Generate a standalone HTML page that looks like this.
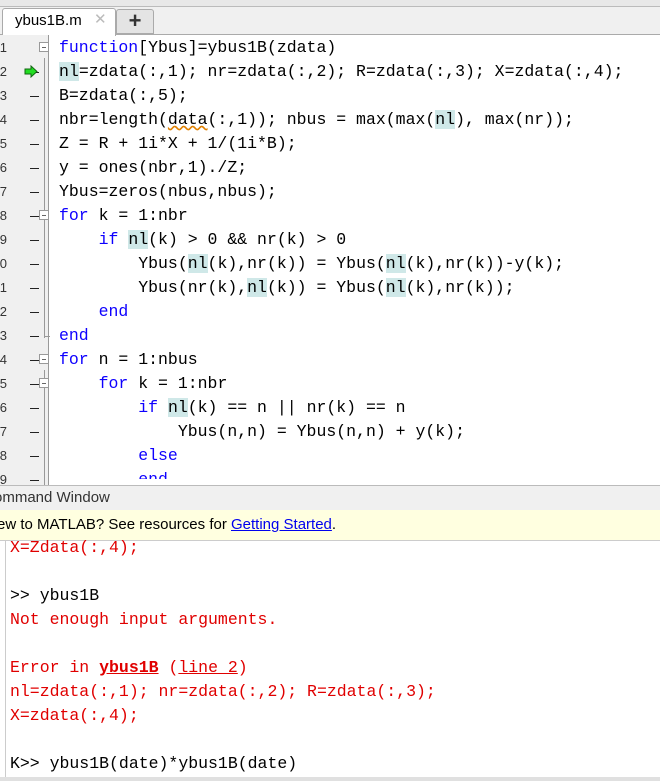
<!DOCTYPE html>
<html><head><style>
body{margin:0;width:660px;height:781px;overflow:hidden;background:#fff;position:relative;font-family:"Liberation Sans",sans-serif}
.m{font-family:"Liberation Mono",monospace;font-size:16.5px;white-space:pre;position:absolute;line-height:24px}
.k{color:#0e00ff}.h{background:#cfe8e8}
.ln{position:absolute;left:-5px;width:12px;font-size:13px;color:#333;overflow:hidden;text-align:right}
.d{position:absolute;left:30px;width:9px;height:1px;background:#222}
.r{color:#e00000}
</style></head><body>
<div style="position:absolute;left:0;top:0;width:660px;height:6px;background:#e8e8e8;border-bottom:1px solid #bbb"></div>
<div style="position:absolute;left:0;top:7px;width:660px;height:27px;background:#f0f0f0;border-bottom:1px solid #aaa"></div>
<div style="position:absolute;left:2px;top:8px;width:112px;height:27px;background:#fff;border:1px solid #aaa;border-bottom:none;border-radius:3px 3px 0 0"></div>
<div style="position:absolute;left:15px;top:12px;font-size:15px;color:#000">ybus1B.m</div>
<div style="position:absolute;left:94px;top:10px;font-size:15px;color:#bbb">✕</div>
<div style="position:absolute;left:116px;top:9px;width:36px;height:23px;background:#e4e4e4;border:1px solid #aaa;border-radius:3px 3px 0 0;text-align:center;font-size:22px;line-height:22px;font-weight:bold;color:#333">+</div>
<div style="position:absolute;left:0;top:35px;width:48px;height:450px;background:#f0f0f0;border-right:1px solid #999"></div>
<div style="position:absolute;left:44px;top:58px;width:1px;height:280px;background:#999"></div>
<div style="position:absolute;left:44px;top:370px;width:1px;height:115px;background:#999"></div>
<div id="ed"></div>
<div style="position:absolute;left:0;top:485px;width:660px;height:25px;background:#f0f0f0;border-top:1px solid #bbb;border-bottom:1px solid #ccc"></div>
<div style="position:absolute;left:-6px;top:489px;font-size:15px;color:#333">ommand Window</div>
<div style="position:absolute;left:0;top:510px;width:660px;height:30px;background:#ffffe0;border-bottom:1px solid #ccc"></div>
<div style="position:absolute;left:-3px;top:516px;font-size:15px;color:#000">ew to MATLAB? See resources for <span style="color:#0000ee;text-decoration:underline">Getting Started</span>.</div>
<div style="position:absolute;left:5px;top:541px;width:1px;height:240px;background:#ccc"></div>
<div class="m r" style="left:10px;top:536px">X=Zdata(:,4);</div>
<div class="m" style="left:10px;top:584px">&gt;&gt; ybus1B</div>
<div class="m r" style="left:10px;top:608px">Not enough input arguments.</div>
<div class="m r" style="left:10px;top:656px">Error in <b style="text-decoration:underline">ybus1B</b> (<u>line 2</u>)</div>
<div class="m r" style="left:10px;top:680px">nl=zdata(:,1); nr=zdata(:,2); R=zdata(:,3);</div>
<div class="m r" style="left:10px;top:704px">X=zdata(:,4);</div>
<div class="m" style="left:10px;top:752px">K&gt;&gt; ybus1B(date)*ybus1B(date)</div>
<div style="position:absolute;left:0;top:777px;width:660px;height:4px;background:#e0e0e0"></div>
<script>
var L=[
['<span class="k">function</span>[Ybus]=ybus1B(zdata)','f'],
['<span class="h">nl</span>=zdata(:,1); nr=zdata(:,2); R=zdata(:,3); X=zdata(:,4);','a'],
['B=zdata(:,5);',''],
['nbr=length(<span style="text-decoration:underline wavy #e08000">data</span>(:,1)); nbus = max(max(<span class="h">nl</span>), max(nr));',''],
['Z = R + 1i*X + 1/(1i*B);',''],
['y = ones(nbr,1)./Z;',''],
['Ybus=zeros(nbus,nbus);',''],
['<span class="k">for</span> k = 1:nbr','f'],
['    <span class="k">if</span> <span class="h">nl</span>(k) &gt; 0 &amp;&amp; nr(k) &gt; 0',''],
['        Ybus(<span class="h">nl</span>(k),nr(k)) = Ybus(<span class="h">nl</span>(k),nr(k))-y(k);',''],
['        Ybus(nr(k),<span class="h">nl</span>(k)) = Ybus(<span class="h">nl</span>(k),nr(k));',''],
['    <span class="k">end</span>',''],
['<span class="k">end</span>','e'],
['<span class="k">for</span> n = 1:nbus','f'],
['    <span class="k">for</span> k = 1:nbr','f'],
['        <span class="k">if</span> <span class="h">nl</span>(k) == n || nr(k) == n',''],
['            Ybus(n,n) = Ybus(n,n) + y(k);',''],
['        <span class="k">else</span>',''],
['        <span class="k">end</span>','']];
var h='';
for(var i=0;i<L.length;i++){var t=36+i*24;
h+='<div class="m" style="left:59px;top:'+t+'px">'+L[i][0]+'</div>';
h+='<div class="ln" style="top:'+(t+4)+'px">'+((i+1)%10)+'</div>';
if(i>0)h+='<div class="d" style="top:'+(t+12)+'px"></div>';
if(L[i][1]=='f')h+='<div style="position:absolute;left:39px;top:'+(t+6)+'px;width:10px;height:10px;border:1px solid #999;background:#fff;box-sizing:border-box"><div style="position:absolute;left:2px;top:4px;width:4px;height:1px;background:#666"></div></div>';
if(L[i][1]=='e')h+='<div style="position:absolute;left:44px;top:'+(t+12)+'px;width:6px;height:1px;background:#999"></div>';
if(L[i][1]=='a')h+='<svg style="position:absolute;left:24px;top:'+(t+5)+'px" width="14" height="13"><path d="M1 4h6V1l6 5.5-6 5.5V9H1z" fill="#22dd22" stroke="#116611"/></svg>';
}
document.getElementById('ed').innerHTML=h;
</script>
<div style="position:absolute;left:49px;top:479px;width:611px;height:6px;background:#fff"></div>
</body></html>
